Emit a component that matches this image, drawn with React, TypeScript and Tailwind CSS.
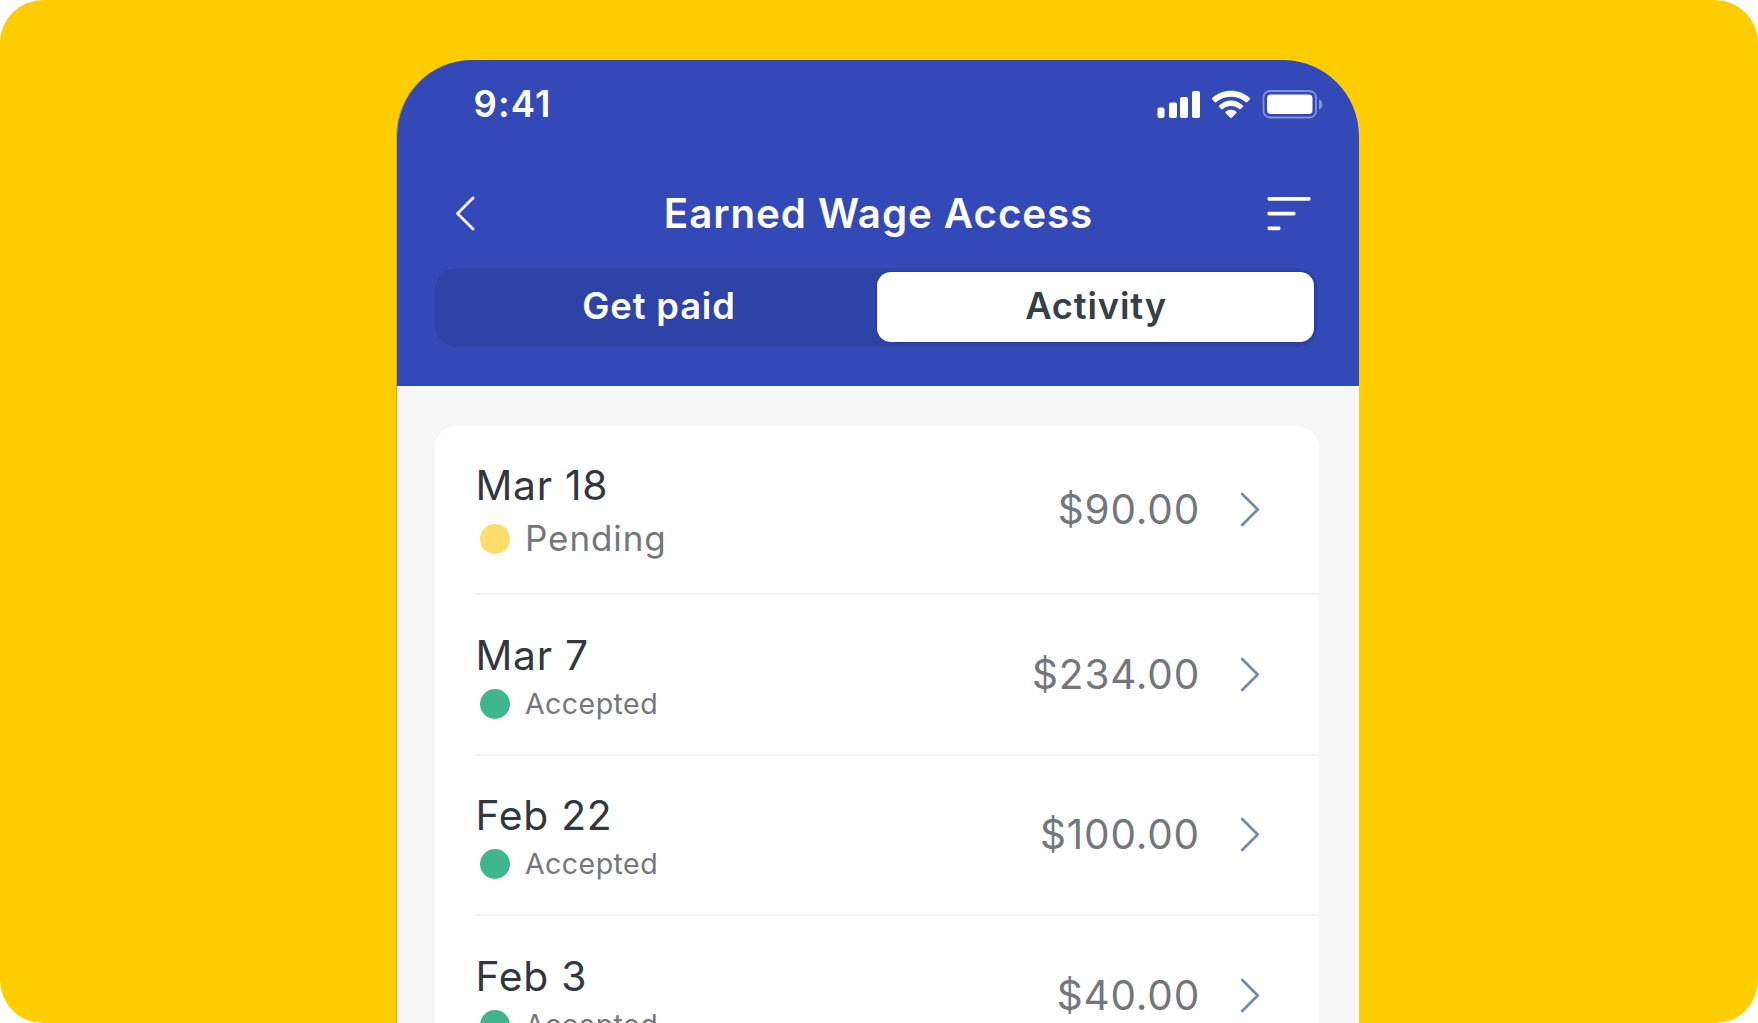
interface Transaction {
  date: string;
  amount: string;
  status: "Pending" | "Accepted";
}

const transactions: Transaction[] = [
  { date: "Mar 18", amount: "$90.00", status: "Pending" },
  { date: "Mar 7", amount: "$234.00", status: "Accepted" },
  { date: "Feb 22", amount: "$100.00", status: "Accepted" },
  { date: "Feb 3", amount: "$40.00", status: "Accepted" },
];

function StatusIcons() {
  return (
    <svg width="168" height="30" viewBox="0 0 168 30" fill="none" aria-hidden="true">
      <g fill="#fff">
        <rect x="0.5" y="17.5" width="7" height="10.5" rx="2" />
        <rect x="12" y="12.5" width="8" height="15.5" rx="2" />
        <rect x="23" y="7" width="8" height="21" rx="2" />
        <rect x="35" y="1" width="8" height="27" rx="2" />
        <path d="M55 9.300Q54.700 8.400 55.500 7.700C66 -1.600 82 -1.600 92.500 7.700Q93.300 8.400 93 9.300L90.300 12Q89.500 12.800 88.600 12C80 5 68 5 59.400 12Q58.500 12.800 57.700 12Z" />
        <path d="M62 15.600C69 8.700 79 8.700 86 15.600Q86.500 16.200 86 16.800L83.700 19Q83 19.600 82.200 19C77.500 14.900 70.500 14.900 65.800 19Q65 19.600 64.300 19L62 16.800Q61.500 16.200 62 15.600Z" />
        <path d="M68.700 21.700C71.800 19.100 76.200 19.100 79.300 21.700Q80 22.300 79.400 23L74.700 27.700Q74 28.400 73.300 27.700L68.600 23Q68 22.300 68.700 21.700Z" />
        <rect x="110" y="4.500" width="45.500" height="19.500" rx="4" />
        <path d="M162 9.500C166.500 11 166.500 18 162 19.500Z" opacity="0.4" />
      </g>
      <rect x="106.500" y="1" width="52.500" height="26.500" rx="6.500" stroke="#fff" strokeOpacity="0.4" strokeWidth="1.800" />
    </svg>
  );
}

function TransactionRow({ date, amount, status }: Transaction) {
  const pending = status === "Pending";
  return (
    <li className="flex items-start justify-between border-b-2 border-[#f0f1f7] h-[161px] first:h-[169px] nth-3:h-[160px] pt-[36px] first:pt-[35px] nth-3:pt-[35px]">
      <div>
        <div className="pl-[0.5px] text-[40.8px] leading-[48px] tracking-[0.018em] text-[#30373f]">{date}</div>
        <div className={pending ? "flex items-center h-[60px] pl-[5px]" : "flex items-center h-[50px] pl-[5px]"}>
          <span className={pending ? "size-[30px] rounded-full bg-[#ffdc6b]" : "size-[30px] rounded-full bg-[#3eb58c]"} />
          <span
            className={
              pending
                ? "ml-[15px] -mt-[2px] text-[35px] leading-[42px] tracking-[0.026em] text-[#73777c]"
                : "ml-[15px] text-[28.5px] leading-[34px] tracking-[0.016em] text-[#73777c]"
            }
          >
            {status}
          </span>
        </div>
      </div>
      <div className={pending ? "flex items-center h-12 mt-[25px] pr-[59px]" : "flex items-center h-12 mt-[20px] pr-[59px]"}>
        <span className="text-[40.5px] leading-[48px] tracking-[0.02em] text-[#73777c]">{amount}</span>
        <svg className="ml-[40px]" width="20" height="36" viewBox="0 0 20 36" fill="none" aria-hidden="true">
          <path d="M2.200 2L17.700 17.500L2.200 33" stroke="#778aa5" strokeWidth="2.700" strokeLinecap="round" strokeLinejoin="round" />
        </svg>
      </div>
    </li>
  );
}

export default function App() {
  return (
    <div className="h-[1023px] w-[1758px] overflow-hidden bg-white font-['Inter',sans-serif]">
      <div className="flex h-full overflow-hidden rounded-[43px] bg-[#ffcd00] pt-[60px] pl-[396px]">
        <main className="h-[963px] w-[963px] overflow-hidden rounded-t-[76px] border-l border-[#d0a81c] bg-[#f7f7f7]">
          <header className="h-[326px] bg-[#3349b7] pl-[38px] pr-[41px] text-white">
            <div className="flex h-[108px] items-start justify-between pt-[22px] pl-[38.5px]">
              <span className="text-[36.5px] leading-[44px] font-[580] tracking-[0.03em]">9:41</span>
              <div className="mt-[8px] -mr-[7px]">
                <StatusIcons />
              </div>
            </div>
            <div className="flex h-[92px] items-center pl-[20px] pr-[7px]">
              <svg width="22" height="36" viewBox="0 0 22 36" fill="none" aria-label="Back">
                <path d="M18 2L2.500 17.500L18 33" stroke="#fff" strokeWidth="2.800" strokeLinecap="round" strokeLinejoin="round" />
              </svg>
              <h1 className="flex-1 pl-[13px] text-center text-[40.3px] leading-[48px] font-[570] tracking-[0.023em]">Earned Wage Access</h1>
              <svg width="44" height="36" viewBox="0 0 44 36" fill="#fff" aria-label="Filter">
                <rect x="0.500" y="1" width="43" height="3.700" rx="1.400" />
                <rect x="0.500" y="15.700" width="28" height="3.700" rx="1.400" />
                <rect x="0.500" y="30.500" width="13" height="3.700" rx="1.400" />
              </svg>
            </div>
            <div className="mt-2 flex h-[79px] rounded-[22px] bg-[#2e43a8] p-1 text-[36.3px] font-[570] tracking-[0.023em]">
              <button className="h-[68px] flex-1 pl-[2px]">Get paid</button>
              <button className="h-[70px] w-[437px] rounded-[14px] bg-white pb-[2px] pl-px text-[#383e47] shadow-[0_0_2px_#1a2d9c]">Activity</button>
            </div>
          </header>
          <ul className="mt-10 mr-[40px] ml-[38px] rounded-t-[22px] bg-white pl-[40px]">
            {transactions.map((t) => (
              <TransactionRow key={t.date} {...t} />
            ))}
          </ul>
        </main>
      </div>
    </div>
  );
}
